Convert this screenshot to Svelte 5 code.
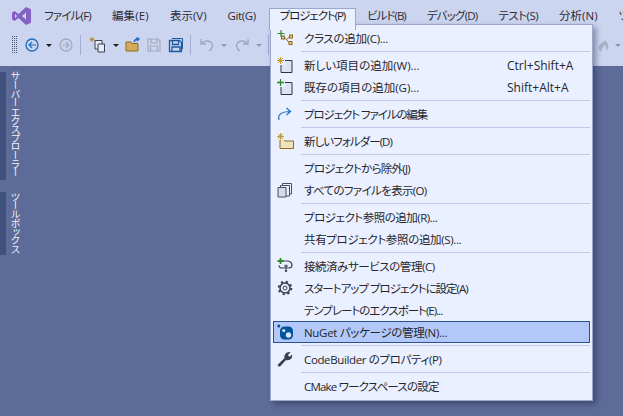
<script>
  const menus = [
    { t: 'ファイル(F)', ls: -0.8 }, { t: '編集(E)', ls: 0.15 }, { t: '表示(V)', ls: 0 }, { t: 'Git(G)', ls: -0.4 }
  ];
  const menusR = [
    { t: 'ビルド(B)', ls: -1 }, { t: 'デバッグ(D)', ls: -0.8 }, { t: 'テスト(S)', ls: -0.5 },
    { t: '分析(N)', ls: 0 }, { t: 'ツール(T)', ls: -0.8 }
  ];
  const rows = [
    { t: 'クラスの追加(C)...', i: 'class', ls: -0.3 }, { sep: 1 },
    { t: '新しい項目の追加(W)...', k: 'Ctrl+Shift+A', i: 'new', ls: 0 },
    { t: '既存の項目の追加(G)...', k: 'Shift+Alt+A', i: 'add', ls: 0 }, { sep: 1 },
    { t: 'プロジェクト ファイルの編集', i: 'edit', ls: -1.1 }, { sep: 1 },
    { t: '新しいフォルダー(D)', i: 'folder', ls: -0.95 }, { sep: 1 },
    { t: 'プロジェクトから除外(J)', ls: -0.75 },
    { t: 'すべてのファイルを表示(O)', i: 'files', ls: -0.65 }, { sep: 1 },
    { t: 'プロジェクト参照の追加(R)...', ls: -0.5 },
    { t: '共有プロジェクト参照の追加(S)...', ls: -0.35 }, { sep: 1 },
    { t: '接続済みサービスの管理(C)', i: 'svc', ls: -0.45 },
    { t: 'スタートアップ プロジェクトに設定(A)', i: 'gear', ls: -1 },
    { t: 'テンプレートのエクスポート(E)...', ls: -1 },
    { t: 'NuGet パッケージの管理(N)...', i: 'nuget', on: 1, ls: -0.3 }, { sep: 1 },
    { t: 'CodeBuilder のプロパティ(P)', i: 'wrench', ls: -0.36 }, { sep: 1 },
    { t: 'CMake ワークスペースの設定', ls: -0.8 }
  ];
</script>

<div class="app">
  <header class="top">
    <nav class="menubar">
      <svg class="logo" width="22" height="20" viewBox="0 0 22 20"><path fill="#8661c5" d="M1 6.500 3.500 5 7.500 8 15 1l5 2.200v13.600L15 19l-7.500-7-4 3L1 13.500zM4 8v4l2-2zm7 2 4 3.400V6.600z" fill-rule="evenodd"/></svg>
      {#each menus as m}<span class="mi" style="letter-spacing:{m.ls}px">{m.t}</span>{/each}
      <span class="mi open">プロジェクト(P)</span>
      {#each menusR as m}<span class="mi" style="letter-spacing:{m.ls}px">{m.t}</span>{/each}
    </nav>
    <div class="toolbar">
      <svg class="grip" width="6" height="18"><pattern id="g" width="2" height="2" patternUnits="userSpaceOnUse"><rect width="1" height="1" fill="#50557a"/></pattern><rect width="6" height="18" fill="url(#g)"/></svg>
      <svg class="tb" width="16" height="16" viewBox="0 0 16 16"><circle cx="8" cy="8" r="6" fill="none" stroke="#1e6fc0" stroke-width="1.300"/><path d="M12 8H5M8 5 5 8l3 3" fill="none" stroke="#1e6fc0" stroke-width="1.200"/></svg>
      <i class="caret"></i>
      <svg class="tb" width="16" height="16" viewBox="0 0 16 16"><circle cx="8" cy="8" r="6" fill="none" stroke="#a2a9bd" stroke-width="1.300"/><path d="M4 8h7M8 5l3 3-3 3" fill="none" stroke="#a2a9bd" stroke-width="1.200"/></svg>
      <b class="div"></b>
      <svg class="tb first" width="18" height="18" viewBox="0 0 18 18"><path d="M3 1v5M.8 3.500h4.400M1.300 1.800l3.400 3.400M4.700 1.800 1.300 5.200" stroke="#b88a2c"/><path d="M6 4.500h7V13H6z" fill="#e6ebf8" stroke="#3a3f52"/><path d="M9 8h6.500v8H9z" fill="#e6ebf8" stroke="#3a3f52"/></svg>
      <i class="caret"></i>
      <svg class="tb" width="16" height="16" viewBox="0 0 16 16"><path d="M1 5h5l1 1.500h6V14H1z" fill="#d2ab5c" stroke="#8f6a1e"/><path d="M9 5c.5-2 2-3 4-3M11.500.5 14 2l-2 2" fill="none" stroke="#1e6fc0" stroke-width="1.300"/></svg>
      <svg class="tb sv" width="16" height="16" viewBox="0 0 16 16"><path d="M2 2h10l2 2v10H2zM5 2v4h6V2M4.500 14V9h7v5" fill="none" stroke="#a2a9bd" stroke-width="1.200"/></svg>
      <svg class="tb" width="16" height="16" viewBox="0 0 16 16"><path d="M1.500 3.500h10l2 2v9h-12zM4.500 3.500v4h6v-4M4 14.500V10h8v4.500" fill="none" stroke="#1c5a9e" stroke-width="1.300"/><path d="M4 1.500h10.500V12" fill="none" stroke="#1c5a9e"/></svg>
      <b class="div"></b>
      <svg class="tb first" width="16" height="16" viewBox="0 0 16 16"><path d="M2 2v5h5M2.500 6.500C5 3.500 10 3 12.500 6c2 2.500 1 5.500-2.500 8" fill="none" stroke="#a2a9bd" stroke-width="1.400"/></svg>
      <i class="caret dimc"></i>
      <svg class="tb redo" width="16" height="16" viewBox="0 0 16 16"><path d="M14 2v5H9M13.500 6.500C11 3.500 6 3 3.500 6c-2 2.500-1 5.500 2.500 8" fill="none" stroke="#a2a9bd" stroke-width="1.400"/></svg>
      <i class="caret dimc"></i>
      <b class="div"></b>
      <svg class="tb far" width="12" height="16" viewBox="0 0 12 16"><path d="M8 1C9 5 4 5 2 9c-1 3 1 5 3 6C4 12 6 10 8 8c0 2 2 3 1 6 2-2 3-4 2-7-1-2-3-3-3-6z" fill="#a9b1c8"/></svg>
      <i class="caret dimc"></i>
    </div>
  </header>

  <main class="work">
    <aside class="rail">
      <div class="tab t1"><span>サーバー エクスプローラー</span></div>
      <div class="tab t2"><span>ツールボックス</span></div>
    </aside>
  </main>

  <div class="menu">
    {#each rows as r}
      {#if r.sep}
        <div class="sep"></div>
      {:else}
        <div class="row" class:on={r.on}>
          <span class="ic">
            {#if r.i === 'class'}
              <svg width="18" height="16" viewBox="0 0 18 16"><path d="M4 0v7M.5 3.500h7" stroke="#2b8a2b" stroke-width="1.200"/><path d="M6 7l3.500 2.500L13 6.500M9.500 9.500 12.500 13" stroke="#8f6a1e" fill="none"/><rect x="4.500" y="6" width="3" height="3" fill="#e8c77e" stroke="#8f6a1e"/><rect x="12.500" y="5" width="3" height="3" fill="#e8c77e" stroke="#8f6a1e"/><rect x="12" y="11.500" width="3" height="3" fill="#e8c77e" stroke="#8f6a1e"/></svg>
            {:else if r.i === 'new'}
              <svg width="18" height="16" viewBox="0 0 18 16"><path d="M4 3.500h11v12H4z" fill="#dde3f2" stroke="#303446"/><rect x="0" y="0" width="8" height="8" fill="#eaf0ff"/><path d="M3.500 0v7M0 3.500h7M1 1l5 5M6 1 1 6" stroke="#c49a3a"/></svg>
            {:else if r.i === 'add'}
              <svg width="18" height="16" viewBox="0 0 18 16"><path d="M4 3.500h11v12H4z" fill="#dde3f2" stroke="#303446"/><rect x="0" y="0" width="8" height="8" fill="#eaf0ff"/><path d="M3.500 0v7M0 3.500h7" stroke="#2b8a2b" stroke-width="1.300"/></svg>
            {:else if r.i === 'edit'}
              <svg width="16" height="14" viewBox="0 0 16 14"><path d="M2 13C.5 8 4 4.500 13 4.500M9.500 1 13.500 4.500 9.500 8" fill="none" stroke="#1e6fc0" stroke-width="1.200"/></svg>
            {:else if r.i === 'folder'}
              <svg width="18" height="16" viewBox="0 0 18 16"><path d="M3 6.500h4l1 1.500h8.500v7.500H3z" fill="#efe3bd" stroke="#8f6a1e"/><rect width="8" height="7" fill="#eaf0ff"/><path d="M3.500 0v7M0 3.500h7M1 1l5 5M6 1 1 6" stroke="#c49a3a"/></svg>
            {:else if r.i === 'files'}
              <svg width="16" height="16" viewBox="0 0 16 16"><path d="M5.500 1.500h9V12h-9z" fill="#eaf0ff" stroke="#4a4f60"/><path d="M3.500 3.500h9V14h-9z" fill="#eaf0ff" stroke="#4a4f60"/><path d="M1 5.500h8V15H1z" fill="#d5dbea" stroke="#4a4f60"/></svg>
            {:else if r.i === 'svc'}
              <svg width="18" height="16" viewBox="0 0 18 16"><path d="M3.500 0v6M.5 3h6" stroke="#2b8a2b" stroke-width="1.800"/><path d="M6 3h4c3 0 5 2 5 4 0 2-1.500 3-3 3H5C3 10 2 9 2 7.500" fill="none" stroke="#3a3f52" stroke-width="1.200"/><path d="M9 6.500v7M7 8h4M8 12l1 2 1-2" stroke="#3a3f52" fill="none"/></svg>
            {:else if r.i === 'gear'}
              <svg width="16" height="16" viewBox="0 0 16 16"><circle cx="8" cy="8" r="5" fill="none" stroke="#3a3f52" stroke-width="1.500"/><circle cx="8" cy="8" r="6.300" fill="none" stroke="#3a3f52" stroke-width="2" stroke-dasharray="2.200 2.750"/><circle cx="8" cy="8" r="2" fill="none" stroke="#3a3f52"/></svg>
            {:else if r.i === 'nuget'}
              <svg width="18" height="16" viewBox="0 0 18 16"><circle cx="1.800" cy="2" r="1.500" fill="#00539c"/><rect x="3" y="2.500" width="13" height="13" rx="4.500" fill="#00539c"/><circle cx="6.800" cy="6.500" r="1.600" fill="#d5e4fb"/><circle cx="11.500" cy="11" r="2.700" fill="#d5e4fb"/></svg>
            {:else if r.i === 'wrench'}
              <svg width="16" height="16" viewBox="0 0 16 16"><path d="M1.500 15.500.5 14 7.500 7C6.800 4 9 1 12.500 1l1 .3L11 4l1.500 2L15 3.500c1 3.500-2 6.500-6 5.500L3 15.500z" fill="#3b3e4a"/></svg>
            {/if}
          </span>
          <span class="lb" style="letter-spacing:{r.ls}px">{r.t}</span>
          {#if r.k}<span class="key">{r.k}</span>{/if}
        </div>
      {/if}
    {/each}
  </div>
</div>

<style>
  :global(body) { margin: 0; background: #5d6b99; }
  .app {
    position: relative; width: 623px; height: 416px; overflow: hidden;
    display: flex; flex-direction: column;
    font: 11.5px "Open Sans", "Noto Sans CJK JP", sans-serif; color: #26262c;
    font-feature-settings: "palt";
  }
  .top { background: #ccd5f0; height: 66px; flex: none; }
  .menubar { display: flex; align-items: center; gap: 1px; height: 30px; box-sizing: border-box; white-space: nowrap; overflow: hidden; }
  .logo { margin: 2px 0 0 11px; flex: none; }
  .mi { flex: none; padding: 0 10px; color: #2c2c34; }
  .mi.open {
    align-self: flex-end; height: 22px; line-height: 13px; margin-left: 2px;
    background: #eaf0ff; border: 1px solid #9ba7cc; border-bottom: 0; color: #1e1e1e;
    box-sizing: border-box; position: relative; z-index: 3; letter-spacing: -1.1px;
  }
  .toolbar { display: flex; align-items: center; height: 36px; padding: 0 0 6px 12px; box-sizing: border-box; }
  .grip { flex: none; }
  .tb { flex: none; margin-left: 6px; }
  .first { margin-left: 8px; }
  .redo { margin-left: 7px; }
  .sv { margin-left: 5px; }
  .far { margin-left: 328px; }
  .caret { flex: none; width: 0; height: 0; border: 3px solid transparent; border-top: 3px solid #1e1e1e; border-bottom: 0; margin-left: 6px; }
  .dimc { border-top-color: #8f96ab; }
  .div { flex: none; width: 1px; height: 20px; background: #a4aecf; margin-left: 6px; }

  .work { flex: 1; background: #5d6b99; }
  .rail { width: 24px; padding-top: 6px; display: flex; flex-direction: column; gap: 12px; }
  .tab { border-left: 6px solid #40507c; box-sizing: border-box; width: 24px; display: flex; justify-content: center; color: #f2f4fb; overflow: visible; }
  .t1 { height: 108px; }
  .t2 { height: 63px; }
  .tab span { writing-mode: vertical-rl; white-space: nowrap; font-size: 10px; line-height: 18px; font-feature-settings: "vpal"; }
  .t1 span { letter-spacing: -0.85px; }
  .t2 span { letter-spacing: -0.4px; }

  .menu {
    position: absolute; left: 270px; top: 24px; width: 323px; box-sizing: border-box;
    padding: 2px 2px 3px; background: #eaf0ff; border: 1px solid #9ba7cc;
    box-shadow: 3px 3px 6px rgba(30, 36, 60, .45); z-index: 2;
  }
  .row { display: flex; align-items: center; height: 22px; box-sizing: border-box; white-space: nowrap; }
  .row.on { background: #b2c8f9; outline: 1px solid #2e4f8f; outline-offset: -1px; }
  .ic { width: 31px; flex: none; display: flex; align-items: center; padding-left: 4px; box-sizing: border-box; }
  .lb { flex: 1; }
  .key { width: 83px; flex: none; font-size: 12px; }
  .sep { height: 1px; margin: 2px 0 2px 28px; background: #c0cbea; }
</style>
